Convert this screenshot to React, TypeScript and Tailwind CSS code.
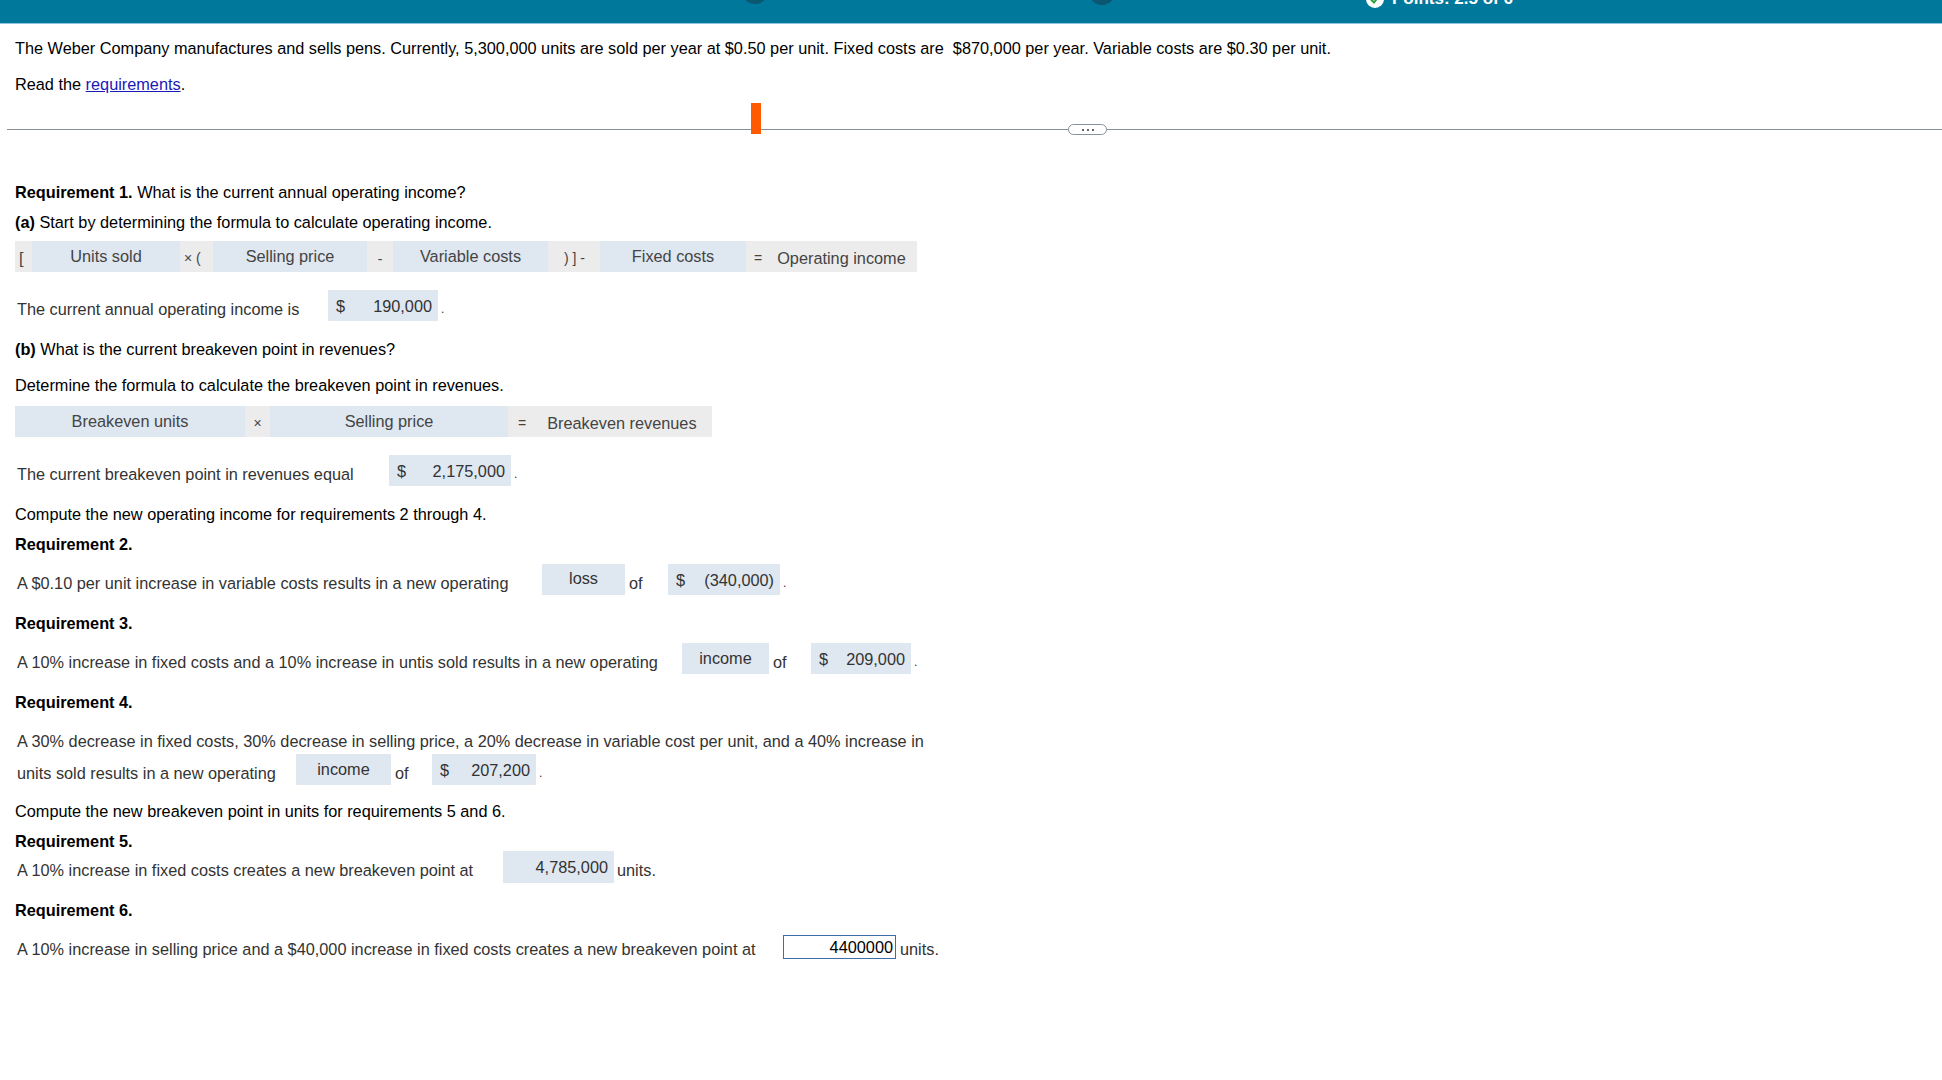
import React from 'react';

const font = { fontFamily: '"Liberation Sans", Arial, sans-serif' };

function Blue({ w, children, align = 'center', className = '' }: { w: string; children: React.ReactNode; align?: 'center' | 'between' | 'right'; className?: string }) {
  const justify = align === 'center' ? 'justify-center' : align === 'between' ? 'justify-between' : 'justify-end';
  return (
    <div className={`flex items-center ${justify} ${w} h-[31px] bg-[#dfe7f1] text-[#333] ${className}`}>
      {children}
    </div>
  );
}

function Money({ w, value }: { w: string; value: string }) {
  return (
    <Blue w={w} align="between" className="pl-[8px] pr-[6px]">
      <span>$</span>
      <span>{value}</span>
    </Blue>
  );
}

function Heading({ children, className = '' }: { children: React.ReactNode; className?: string }) {
  return <div className={`leading-[20px] text-black ${className}`}>{children}</div>;
}

export default function App() {
  return (
    <div className="min-h-screen w-full bg-white text-[16.3px] leading-[24px]" style={font}>
      {/* Top bar */}
      <div className="relative h-[24px] bg-[#00789c] border-b border-[#8cc6d8] overflow-hidden">
        <div className="absolute left-[742px] top-[-22px] w-[26px] h-[26px] rounded-full bg-[#0b5670]" />
        <div className="absolute left-[1089px] top-[-21px] w-[26px] h-[26px] rounded-full bg-[#0b5670]" />
        <div className="absolute left-[1366px] top-[-13px] flex items-center gap-[8px]">
          <div className="w-[18px] h-[18px] rounded-full bg-white flex items-center justify-center">
            <svg width="12" height="12" viewBox="0 0 12 12">
              <path d="M2 6.5 L5 9.5 L10 3" stroke="#2e9e3a" strokeWidth="2" fill="none" />
            </svg>
          </div>
          <span className="text-white font-bold text-[17px]">Points: 2.5 of 6</span>
        </div>
      </div>

      <div className="pl-[15px]">
        <Heading className="mt-[14px]">
          The Weber Company manufactures and sells pens. Currently, 5,300,000 units are sold per year at $0.50 per unit. Fixed costs are&nbsp; $870,000 per year. Variable costs are $0.30 per unit.
        </Heading>
        <Heading className="mt-[16px]">
          Read the <span className="text-[#1a1ab8] underline">requirements</span>.
        </Heading>
      </div>

      {/* Divider */}
      <div className="relative ml-[7px] mt-[35px] h-px bg-[#8a9098]">
        <div className="absolute left-[744px] top-[-26px] w-[10px] h-[31px] bg-[#ff5a00]" />
        <div className="absolute left-[1061px] top-[-5px] w-[39px] h-[11px] rounded-full border border-[#8a9098] bg-white flex items-center justify-center gap-[3px]">
          <span className="w-[2px] h-[2px] bg-[#333] rounded-full" />
          <span className="w-[2px] h-[2px] bg-[#333] rounded-full" />
          <span className="w-[2px] h-[2px] bg-[#333] rounded-full" />
        </div>
      </div>

      <div className="pl-[15px]">
        <Heading className="mt-[52px]">
          <b>Requirement 1.</b> What is the current annual operating income?
        </Heading>
        <Heading className="mt-[10px]">
          <b>(a)</b> Start by determining the formula to calculate operating income.
        </Heading>

        {/* Formula row 1 */}
        <div className="mt-[9px] flex w-[902px] h-[31px] bg-[#ececec] text-[#444]">
          <div className="w-[17px] pl-[4px] flex items-center pt-[3px]">[</div>
          <div className="w-[148px] bg-[#dfe7f1] flex items-center justify-center pb-[2px]">Units sold</div>
          <div className="w-[33px] flex items-center pl-[4px] pt-[3px] text-[14px]">× (</div>
          <div className="w-[154px] bg-[#dfe7f1] flex items-center justify-center pb-[2px]">Selling price</div>
          <div className="w-[26px] flex items-center justify-center pt-[5px] text-[14px]">-</div>
          <div className="w-[155px] bg-[#dfe7f1] flex items-center justify-center pb-[2px]">Variable costs</div>
          <div className="w-[52px] flex items-center pl-[16px] pt-[3px] text-[14px]">) ] -</div>
          <div className="w-[146px] bg-[#dfe7f1] flex items-center justify-center pb-[2px]">Fixed costs</div>
          <div className="flex-1 flex items-center pl-[8px] pt-[3px] gap-[15px]">
            <span className="text-[14px]">=</span>
            <span>Operating income</span>
          </div>
        </div>

        <div className="mt-[18px] pl-[2px] flex items-center text-[#333]">
          <span className="w-[311px] pt-[6px]">The current annual operating income is</span>
          <Money w="w-[110px]" value="190,000" />
          <span className="pl-[3px] pt-[6px] text-[12px]">.</span>
        </div>

        <Heading className="mt-[18px]">
          <b>(b)</b> What is the current breakeven point in revenues?
        </Heading>
        <Heading className="mt-[16px]">Determine the formula to calculate the breakeven point in revenues.</Heading>

        {/* Formula row 2 */}
        <div className="mt-[11px] flex w-[697px] h-[31px] bg-[#ececec] text-[#444]">
          <div className="w-[230px] bg-[#dfe7f1] flex items-center justify-center pb-[2px]">Breakeven units</div>
          <div className="w-[25px] flex items-center justify-center pt-[3px] text-[14px]">×</div>
          <div className="w-[238px] bg-[#dfe7f1] flex items-center justify-center pb-[2px]">Selling price</div>
          <div className="flex-1 flex items-center pl-[10px] pt-[3px] gap-[21px]">
            <span className="text-[14px]">=</span>
            <span>Breakeven revenues</span>
          </div>
        </div>

        <div className="mt-[18px] pl-[2px] flex items-center text-[#333]">
          <span className="w-[372px] pt-[6px]">The current breakeven point in revenues equal</span>
          <Money w="w-[122px]" value="2,175,000" />
          <span className="pl-[3px] pt-[6px] text-[12px]">.</span>
        </div>

        <Heading className="mt-[18px]">Compute the new operating income for requirements 2 through 4.</Heading>
        <Heading className="mt-[10px] font-bold">Requirement 2.</Heading>

        <div className="mt-[10px] pl-[2px] flex items-center text-[#333]">
          <span className="w-[525px] pt-[6px]">A $0.10 per unit increase in variable costs results in a new operating</span>
          <Blue w="w-[83px]" className="pb-[4px]">loss</Blue>
          <span className="w-[43px] pl-[4px] pt-[6px]">of</span>
          <Blue w="w-[112px]" align="between" className="pl-[8px] pr-[6px]">
            <span>$</span>
            <span>(340,000)</span>
          </Blue>
          <span className="pl-[3px] pt-[6px] text-[12px]">.</span>
        </div>

        <Heading className="mt-[18px] font-bold">Requirement 3.</Heading>

        <div className="mt-[10px] pl-[2px] flex items-center text-[#333]">
          <span className="w-[665px] pt-[6px]">A 10% increase in fixed costs and a 10% increase in untis sold results in a new operating</span>
          <Blue w="w-[87px]" className="pb-[2px]">income</Blue>
          <span className="w-[42px] pl-[4px] pt-[6px]">of</span>
          <Money w="w-[100px]" value="209,000" />
          <span className="pl-[3px] pt-[6px] text-[12px]">.</span>
        </div>

        <Heading className="mt-[18px] font-bold">Requirement 4.</Heading>

        <div className="mt-[19px] pl-[2px] leading-[20px] text-[#333]">
          A 30% decrease in fixed costs, 30% decrease in selling price, a 20% decrease in variable cost per unit, and a 40% increase in
        </div>
        <div className="mt-[3px] pl-[2px] flex items-center text-[#333]">
          <span className="w-[279px] pt-[6px]">units sold results in a new operating</span>
          <Blue w="w-[95px]" className="pb-[2px]">income</Blue>
          <span className="w-[41px] pl-[4px] pt-[6px]">of</span>
          <Money w="w-[104px]" value="207,200" />
          <span className="pl-[3px] pt-[6px] text-[12px]">.</span>
        </div>

        <Heading className="mt-[16px]">Compute the new breakeven point in units for requirements 5 and 6.</Heading>
        <Heading className="mt-[10px] font-bold">Requirement 5.</Heading>

        <div className="mt-0 pl-[2px] flex items-center text-[#333]">
          <span className="w-[486px] pt-[6px]">A 10% increase in fixed costs creates a new breakeven point at</span>
          <Blue w="w-[111px]" align="right" className="pr-[6px] h-[32px]">4,785,000</Blue>
          <span className="pl-[3px] pt-[6px]">units.</span>
        </div>

        <Heading className="mt-[17px] font-bold">Requirement 6.</Heading>

        <div className="mt-[13px] pl-[2px] flex items-center text-[#333]">
          <span className="w-[766px] pt-[4px]">A 10% increase in selling price and a $40,000 increase in fixed costs creates a new breakeven point at</span>
          <div className="w-[113px] h-[24px] border border-[#3b6ea8] bg-white flex items-center justify-end pr-[2px] text-black">
            4400000
          </div>
          <span className="pl-[4px] pt-[4px]">units.</span>
        </div>
      </div>
    </div>
  );
}
